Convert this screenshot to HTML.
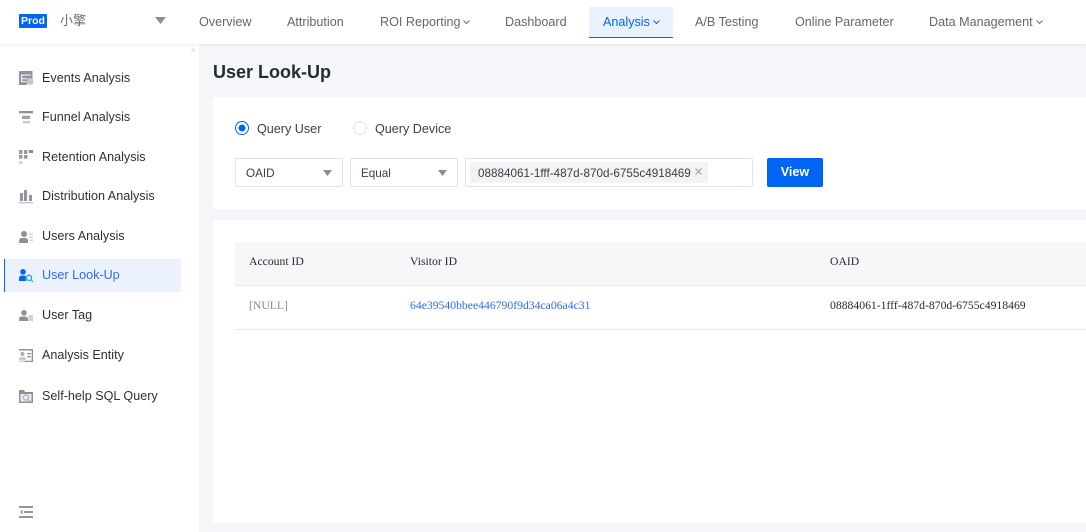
<!DOCTYPE html>
<html><head><meta charset="utf-8"><style>
html,body{margin:0;padding:0}
body{width:1086px;height:532px;overflow:hidden;position:relative;background:#f5f6f9;font-family:"Liberation Sans","Noto Sans CJK SC",sans-serif;color:#262a33}
.a{position:absolute;white-space:nowrap}
.nav{top:14px;height:16px;line-height:16px;font-size:12.6px;color:#63666e}
.side{left:42px;font-size:12.6px;height:16px;line-height:16px;color:#2c303a}
svg.a{overflow:visible}
.box{background:#fff;border:1px solid #dfe3ec;border-radius:2px;box-sizing:border-box}
.t{font-family:"Liberation Serif",serif;font-size:11.7px;line-height:14px;height:14px}
</style></head><body>
<div class="a" style="left:0;top:0;width:1086px;height:44px;background:#fff;box-shadow:0 1px 4px rgba(0,0,0,.08);z-index:3"></div>
<div class="a" style="left:0;top:44px;width:199px;height:488px;background:#fff"></div>
<div style="position:absolute;inset:0;z-index:4">
<div class="a" style="left:19px;top:14px;width:28px;height:14px;line-height:14px;background:#0065f2;color:#fff;font-size:10.5px;font-weight:bold;text-align:center;border-radius:1px">Prod</div>
<div class="a" style="left:60px;top:13px;font-size:13px;line-height:16px;color:#6b6e75">小擎</div>
<svg class="a" style="left:155px;top:17px" width="11" height="7"><path d="M0 0H11L5.500 7Z" fill="#8a8d96"/></svg>
<div class="a nav" style="left:199px">Overview</div>
<div class="a nav" style="left:287px">Attribution</div>
<div class="a nav" style="left:380px">ROI Reporting</div>
<svg class="a" style="left:463px;top:20px" width="7" height="5"><path d="M.5.500L3.500 3.500 6.500.5" fill="none" stroke="#6b6e75"/></svg>
<div class="a nav" style="left:505px">Dashboard</div>
<div class="a" style="left:589px;top:7px;width:84px;height:31px;background:#ebf2fd;border-bottom:1px solid #0e63dc;box-sizing:border-box"></div>
<div class="a nav" style="left:603px;color:#0065f2">Analysis</div>
<svg class="a" style="left:653px;top:20px" width="7" height="5"><path d="M.5.500L3.500 3.500 6.500.5" fill="none" stroke="#0065f2"/></svg>
<div class="a nav" style="left:695px">A/B Testing</div>
<div class="a nav" style="left:795px">Online Parameter</div>
<div class="a nav" style="left:929px">Data Management</div>
<svg class="a" style="left:1036px;top:20px" width="7" height="5"><path d="M.5.500L3.500 3.500 6.500.5" fill="none" stroke="#6b6e75"/></svg>
</div>

<svg class="a" style="left:190px;top:48px" width="6" height="4"><path d="M0 3.500H6L3 0Z" fill="#e4e5e8"/></svg>

<div class="a side" style="top:70px">Events Analysis</div>
<div class="a side" style="top:109px">Funnel Analysis</div>
<div class="a side" style="top:149px">Retention Analysis</div>
<div class="a side" style="top:188px">Distribution Analysis</div>
<div class="a side" style="top:228px">Users Analysis</div>
<div class="a" style="left:4px;top:259px;width:177px;height:33px;background:#ebf2fd;border-left:1px solid #0065f2;box-sizing:border-box"></div>
<div class="a side" style="top:267px;color:#2f6df0">User Look-Up</div>
<div class="a side" style="top:307px">User Tag</div>
<div class="a side" style="top:347px">Analysis Entity</div>
<div class="a side" style="top:388px">Self-help SQL Query</div>

<!-- icons -->
<svg class="a" style="left:19px;top:71px" width="15" height="14"><path d="M0 0H13.500V8A5 5 0 0 0 8 14H0Z" fill="#92959e"/><path d="M2 3.500H11.500V4.700H3.300V7H8V8.200H3.300V10H7V11.200H2Z" fill="#e8e9eb"/><circle cx="11" cy="10.500" r="3.500" fill="#c7c9ce"/></svg>
<svg class="a" style="left:19px;top:111px" width="14" height="13"><path d="M0 0H14V2.300H0Z" fill="#8e9199"/><path d="M3 4.700H11V8H3Z" fill="#a0a3aa"/><path d="M4 10H11V12.300H4Z" fill="#c9cace"/></svg>
<svg class="a" style="left:19px;top:150px" width="14" height="14"><g fill="#9a9ca4"><rect width="3.500" height="4"/><rect x="5" width="3.500" height="4"/><rect x="10" width="4" height="3" fill="#85878f"/><rect y="5" width="3.500" height="3.700"/><rect x="5" y="5" width="3.500" height="3.700"/></g><rect y="11" width="3.500" height="3" fill="#d3d4d8"/></svg>
<svg class="a" style="left:19px;top:190px" width="14" height="14"><g fill="#92959d"><rect x="1" y="3" width="3" height="8"/><rect x="5" y="0" width="3" height="11"/><rect x="10" y="5" width="3" height="6"/></g><rect y="12" width="14" height="1.500" fill="#c9cace"/></svg>
<svg class="a" style="left:19px;top:231px" width="15" height="12"><circle cx="5" cy="3" r="3" fill="#8e9199"/><path d="M0 12V9.500A2.500 2.500 0 0 1 2.500 7H6.500A2.500 2.500 0 0 1 9 9.500V12Z" fill="#8e9199"/><path d="M10 2.500H14V4H10ZM10 5.500H14V7H10ZM10 8.500H14V10H10Z" fill="#d4d5d9"/></svg>
<svg class="a" style="left:19px;top:269px" width="15" height="13"><circle cx="4" cy="2.800" r="2.800" fill="#0065f2"/><path d="M0 12V9A3 3 0 0 1 3 6.500H6.500L7 12Z" fill="#0065f2"/><circle cx="10" cy="8.800" r="2.600" fill="#fff" stroke="#14a6e8" stroke-width="1.300"/><path d="M12 10.800L14 13" stroke="#14c4d8" stroke-width="1.400"/></svg>
<svg class="a" style="left:19px;top:310px" width="14" height="12"><circle cx="5" cy="2.800" r="2.800" fill="#8e9199"/><path d="M0 11V9A2.500 2.500 0 0 1 2.500 6.500H6.500A2.500 2.500 0 0 1 9 9V11Z" fill="#8e9199"/><path d="M9.500 5H14V12L11.750 10.500 9.500 12Z" fill="#d0d1d6"/></svg>
<svg class="a" style="left:19px;top:349px" width="14" height="13"><path d="M0 0H14V1.500H0ZM12.700 1H14V13H6V11.800H12.700Z" fill="#8e9199"/><circle cx="3.500" cy="5" r="2" fill="#a9abb2"/><path d="M0 11V9.500A2 2 0 0 1 2 8H5A2 2 0 0 1 7 9.500V11Z" fill="#c9cace"/><path d="M8 4H12V5.200H8ZM8 7H12V8.200H8Z" fill="#8e9199"/><path d="M0 11.500H6V13H0Z" fill="#d0d1d6"/></svg>
<svg class="a" style="left:19px;top:390px" width="14" height="13"><path d="M0 0H5L6 2H14V13H0Z" fill="#8e9199"/><path d="M1.500 4H12.500V11.500H1.500Z" fill="#eeeef0"/><circle cx="7" cy="7.500" r="2.600" fill="none" stroke="#a9abb2" stroke-width="1.200"/><path d="M9 9.500L11.500 12" stroke="#a9abb2" stroke-width="1.200"/></svg>
<svg class="a" style="left:19px;top:506px" width="14" height="12"><path d="M0 0H14V2H0ZM0 10H14V12H0ZM5 5H14V7H5Z" fill="#92959e"/><path d="M3.500 3.500V8.500L1 6Z" fill="#92959e"/></svg>

<div class="a" style="left:213px;top:61px;font-size:18px;line-height:22px;font-weight:bold;color:#262a33">User Look-Up</div>

<div class="a" style="left:213px;top:97px;width:873px;height:112px;background:#fff;border-radius:4px 0 0 4px"></div>
<svg class="a" style="left:235px;top:121px" width="14" height="14"><circle cx="7" cy="7" r="6.500" fill="#fff" stroke="#0065f2"/><circle cx="7" cy="7" r="3.500" fill="#0065f2"/></svg>
<div class="a" style="left:257px;top:121px;font-size:12.6px;line-height:16px;color:#3a3e48;">Query User</div>
<svg class="a" style="left:353px;top:121px" width="14" height="14"><circle cx="7" cy="7" r="6.500" fill="#fff" stroke="#dfe1e6"/></svg>
<div class="a" style="left:375px;top:121px;font-size:12.6px;line-height:16px;color:#3a3e48">Query Device</div>

<div class="a box" style="left:235px;top:158px;width:108px;height:29px"></div>
<div class="a" style="left:246px;top:166px;font-size:11.7px;line-height:15px;color:#3a3e48">OAID</div>
<svg class="a" style="left:323px;top:170px" width="9" height="6"><path d="M0 0H9L4.500 6Z" fill="#8a8d96"/></svg>
<div class="a box" style="left:350px;top:158px;width:108px;height:29px"></div>
<div class="a" style="left:361px;top:166px;font-size:11.7px;line-height:15px;color:#3a3e48">Equal</div>
<svg class="a" style="left:438px;top:170px" width="9" height="6"><path d="M0 0H9L4.500 6Z" fill="#8a8d96"/></svg>
<div class="a box" style="left:465px;top:158px;width:288px;height:29px"></div>
<div class="a" style="left:470px;top:162px;width:238px;height:21px;background:#f3f3f4;border-radius:2px"></div>
<div class="a" style="left:478px;top:166px;font-size:11.7px;line-height:15px;color:#3a3e48">08884061-1fff-487d-870d-6755c4918469</div>
<svg class="a" style="left:695px;top:168px" width="7" height="7"><path d="M.5.500L6.500 6.500M6.500.5L.5 6.500" stroke="#9a9ca4"/></svg>
<div class="a" style="left:767px;top:158px;width:56px;height:29px;line-height:28px;background:#0065f2;color:#fff;border-radius:2px;font-size:12.6px;font-weight:bold;text-align:center">View</div>

<div class="a" style="left:213px;top:220px;width:873px;height:303px;background:#fff;border-radius:4px 0 0 4px"></div>
<div class="a" style="left:235px;top:242px;width:851px;height:44px;background:#f6f7f9;border-bottom:1px solid #e9eaee;box-sizing:border-box"></div>
<div class="a" style="left:235px;top:329px;width:851px;height:1px;background:#e9eaee"></div>
<div class="a t" style="left:249px;top:255px;color:#262a33">Account ID</div>
<div class="a t" style="left:410px;top:255px;color:#262a33">Visitor ID</div>
<div class="a t" style="left:830px;top:255px;color:#262a33">OAID</div>
<div class="a t" style="left:249px;top:299px;color:#8b8d94">[NULL]</div>
<div class="a t" style="left:410px;top:299px;color:#2f6df0">64e39540bbee446790f9d34ca06a4c31</div>
<div class="a t" style="left:830px;top:299px;color:#262a33">08884061-1fff-487d-870d-6755c4918469</div>
</body></html>
